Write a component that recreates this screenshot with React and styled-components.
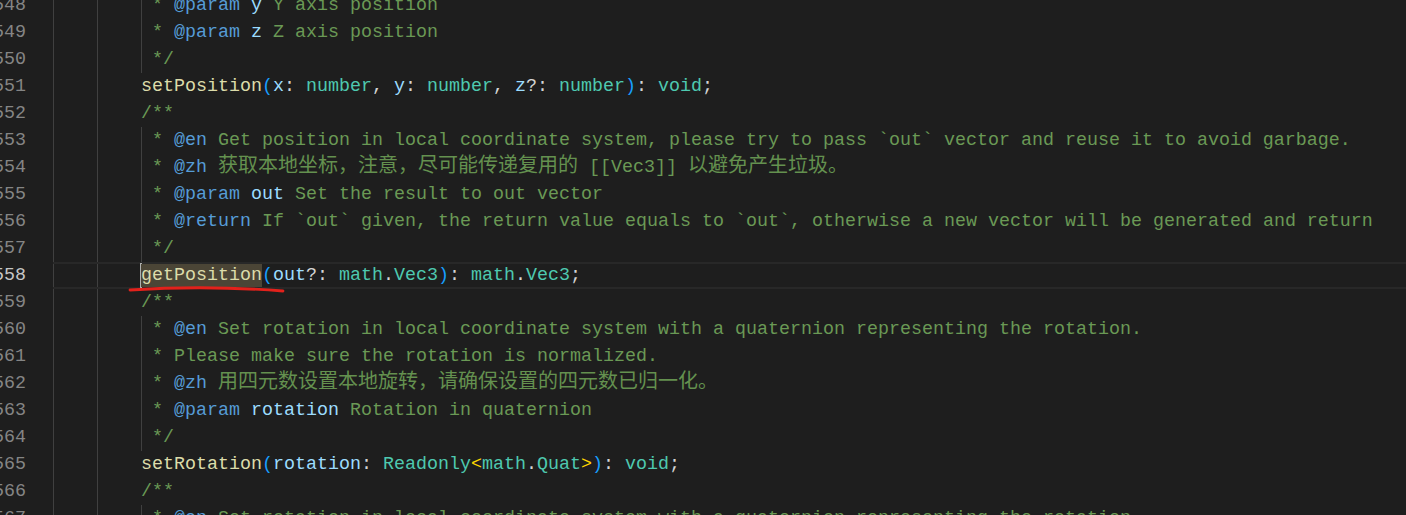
import React from 'react';
import styled, { createGlobalStyle } from 'styled-components';

const GlobalStyle = createGlobalStyle`
  html, body {
    margin: 0;
    padding: 0;
    background: #1e1e1e;
    overflow: hidden;
  }
`;

const COLORS = {
  c: '#6a9955',
  tag: '#569cd6',
  pv: '#9cdcfe',
  fn: '#dcdcaa',
  br: '#179fff',
  ang: '#ffd700',
  p: '#d4d4d4',
  ty: '#4ec9b0',
};

const CHAR = 11;
const INDENT = 4 * CHAR;

// one row of the editor: 8 spaces for code, 9 for the " * " doc lines
const code = (toks) => ({ indent: 8, guides: 2, toks });
const doc = (...toks) => ({ indent: 9, guides: 3, toks: [['c', '* '], ...toks] });

const LINES = [
  doc(['tag', '@param'], ['c', ' '], ['pv', 'y'], ['c', ' Y axis position']),
  doc(['tag', '@param'], ['c', ' '], ['pv', 'z'], ['c', ' Z axis position']),
  { indent: 9, guides: 3, toks: [['c', '*/']] },
  code([
    ['fn', 'setPosition'], ['br', '('], ['pv', 'x'], ['p', ': '], ['ty', 'number'], ['p', ', '],
    ['pv', 'y'], ['p', ': '], ['ty', 'number'], ['p', ', '], ['pv', 'z'], ['p', '?: '],
    ['ty', 'number'], ['br', ')'], ['p', ': '], ['ty', 'void'], ['p', ';'],
  ]),
  code([['c', '/**']]),
  doc(['tag', '@en'], ['c', ' Get position in local coordinate system, please try to pass `out` vector and reuse it to avoid garbage.']),
  doc(['tag', '@zh'], ['c', ' 获取本地坐标，注意，尽可能传递复用的 [[Vec3]] 以避免产生垃圾。']),
  doc(['tag', '@param'], ['c', ' '], ['pv', 'out'], ['c', ' Set the result to out vector']),
  doc(['tag', '@return'], ['c', ' If `out` given, the return value equals to `out`, otherwise a new vector will be generated and return']),
  { indent: 9, guides: 3, toks: [['c', '*/']] },
  {
    ...code([
      ['fn', 'getPosition', 'hl'], ['br', '('], ['pv', 'out'], ['p', '?: '], ['ty', 'math'], ['p', '.'],
      ['ty', 'Vec3'], ['br', ')'], ['p', ': '], ['ty', 'math'], ['p', '.'], ['ty', 'Vec3'], ['p', ';'],
    ]),
    active: true,
  },
  code([['c', '/**']]),
  doc(['tag', '@en'], ['c', ' Set rotation in local coordinate system with a quaternion representing the rotation.']),
  doc(['c', 'Please make sure the rotation is normalized.']),
  doc(['tag', '@zh'], ['c', ' 用四元数设置本地旋转，请确保设置的四元数已归一化。']),
  doc(['tag', '@param'], ['c', ' '], ['pv', 'rotation'], ['c', ' Rotation in quaternion']),
  { indent: 9, guides: 3, toks: [['c', '*/']] },
  code([
    ['fn', 'setRotation'], ['br', '('], ['pv', 'rotation'], ['p', ': '], ['ty', 'Readonly'], ['ang', '<'],
    ['ty', 'math'], ['p', '.'], ['ty', 'Quat'], ['ang', '>'], ['br', ')'], ['p', ': '], ['ty', 'void'], ['p', ';'],
  ]),
  code([['c', '/**']]),
  doc(['tag', '@en'], ['c', ' Set rotation in local coordinate system with a quaternion representing the rotation.']),
];

const FIRST_LINE = 548;

const Editor = styled.div`
  position: relative;
  width: 1406px;
  height: 515px;
  overflow: hidden;
  background: #1e1e1e;
  font-family: "Liberation Mono", "DejaVu Sans Mono", monospace;
  font-size: 18.33px;
`;

const Lines = styled.div`
  display: flex;
  flex-direction: column;
  margin-top: -8px;
`;

const Row = styled.div`
  display: flex;
  height: 27px;
  line-height: 27px;
  overflow: hidden;
`;

const LineNo = styled.div`
  flex: none;
  width: 26px;
  display: flex;
  justify-content: flex-end;
  white-space: nowrap;
  color: ${(p) => (p.$active ? '#c6c6c6' : '#858585')};
`;

const Fold = styled.div`
  flex: none;
  width: 27px;
`;

const guideBg = (n) => Array.from({ length: n }, () => 'linear-gradient(#404040, #404040)').join(', ');
const guidePos = (n) => Array.from({ length: n }, (_, i) => `${i * INDENT}px 0`).join(', ');

const Code = styled.div`
  flex: 1;
  white-space: pre;
  color: #d4d4d4;
  background-image: ${(p) => guideBg(p.$guides)};
  background-position: ${(p) => guidePos(p.$guides)};
  background-size: 1px 100%;
  background-repeat: no-repeat;
  box-shadow: ${(p) => (p.$active ? 'inset 0 2px #282828, inset 0 -2px #282828' : 'none')};
`;

const Tok = styled.span`
  color: ${(p) => COLORS[p.$k]};
`;

const Cjk = styled.span`
  font-family: "Noto Sans CJK SC", "Noto Sans", sans-serif;
  font-size: 20px;
  line-height: 1;
  vertical-align: baseline;
  color: #64914f;
`;

const Highlight = styled.span`
  display: inline-block;
  line-height: 27px;
  vertical-align: top;
  background: linear-gradient(#4b4536, #4b4536) 0 2px / 100% 23px no-repeat;
`;

const Caret = styled.span`
  display: inline-block;
  width: 2px;
  height: 25px;
  margin: 1px -1px 0;
  vertical-align: top;
  background: #aeafad;
`;

const Annotation = styled.svg`
  position: absolute;
  left: 126px;
  top: 283px;
  pointer-events: none;
`;

const CJK_RE = /([\u3000-\u303f\u4e00-\u9fff\uff00-\uffef]+)/;

const renderText = (text) =>
  text.split(CJK_RE).map((part, i) =>
    i % 2 === 1 ? <Cjk key={i}>{part}</Cjk> : part
  );

const Token = ({ k, text, hl }) => {
  const inner = <Tok $k={k}>{renderText(text)}</Tok>;
  if (!hl) return inner;
  return (
    <>
      <Caret />
      <Highlight>{inner}</Highlight>
    </>
  );
};

export default function App() {
  return (
    <>
      <GlobalStyle />
      <Editor>
        <Lines>
          {LINES.map((line, i) => (
            <Row key={i}>
              <LineNo $active={line.active}>{FIRST_LINE + i}</LineNo>
              <Fold />
              <Code $guides={line.guides} $active={line.active}>
                {' '.repeat(line.indent)}
                {line.toks.map(([k, text, hl], j) => (
                  <Token key={j} k={k} text={text} hl={hl} />
                ))}
              </Code>
            </Row>
          ))}
        </Lines>
        <Annotation width="164" height="12" viewBox="0 0 164 12">
          <path d="M4 7 Q 80 2 157 8" fill="none" stroke="#e3211b" strokeWidth="2.8" strokeLinecap="round" />
        </Annotation>
      </Editor>
    </>
  );
}
